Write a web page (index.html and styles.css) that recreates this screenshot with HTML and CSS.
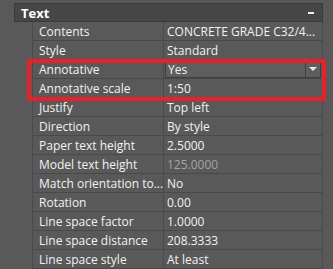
FILE: index.html
```html
<!DOCTYPE html>
<html lang="en">
  <head>
    <meta charset="UTF-8" />
    <title>Properties</title>
    <link rel="stylesheet" href="styles.css">
  </head>
  <body>
    <div class="panel">
      <div class="header">
        <span>Text</span>
        <span class="collapse"></span>
      </div>
      <div class="grid">
        <div class="row"><div class="label">Contents</div><div class="value">CONCRETE GRADE C32/4...</div></div>
        <div class="row"><div class="label">Style</div><div class="value">Standard</div></div>
        <div class="row">
          <div class="label">Annotative</div>
          <div class="value">
            <div class="select"><span>Yes</span><i class="arrow"></i></div>
          </div>
        </div>
        <div class="row"><div class="label">Annotative scale</div><div class="value">1:50</div></div>
        <div class="row"><div class="label">Justify</div><div class="value">Top left</div></div>
        <div class="row"><div class="label">Direction</div><div class="value">By style</div></div>
        <div class="row"><div class="label">Paper text height</div><div class="value">2.5000</div></div>
        <div class="row"><div class="label">Model text height</div><div class="value muted">125.0000</div></div>
        <div class="row"><div class="label">Match orientation to...</div><div class="value">No</div></div>
        <div class="row"><div class="label">Rotation</div><div class="value">0.00</div></div>
        <div class="row"><div class="label">Line space factor</div><div class="value">1.0000</div></div>
        <div class="row"><div class="label">Line space distance</div><div class="value">208.3333</div></div>
        <div class="row"><div class="label">Line space style</div><div class="value">At least</div></div>
      </div>
      <div class="highlight"></div>
    </div>
  </body>
</html>
```

FILE: styles.css
```css
* {
  margin: 0;
  padding: 0;
  box-sizing: border-box;
}
body {
  background: #595959;
  font-family: "Open Sans", "Noto Sans", sans-serif;
  font-size: 12px;
  color: #f2f2f2;
  overflow: hidden;
}
.panel {
  position: relative;
  margin: 3px 0 0 14px;
  width: 309px;
}
.header {
  display: flex;
  align-items: center;
  justify-content: space-between;
  height: 19px;
  padding: 0 5px 0 6px;
  background: #464646;
  border: 1px solid #3a3a3a;
  font-weight: bold;
  font-size: 13px;
  color: #fff;
}
.header .collapse {
  width: 6px;
  height: 2px;
  background: #f0f0f0;
  margin-right: 3px;
}
.grid {
  padding-left: 18px;
}
.row {
  display: flex;
  height: 19px;
  border-bottom: 1px solid #494949;
}
.label,
.value {
  display: flex;
  align-items: center;
  white-space: nowrap;
  overflow: hidden;
}
.label {
  width: 132px;
  padding-left: 6px;
  border-left: 1px solid #4a4a4a;
  border-right: 1px solid #4a4a4a;
}
.value {
  flex: 1;
  padding-left: 3px;
  border-right: 1px solid #4a4a4a;
}
.value.muted {
  color: #a3a3a3;
}
.select {
  display: flex;
  width: 156px;
  height: 17px;
  margin-left: -2px;
  background: #5e5e5e;
  border: 1px solid #3e3e3e;
}
.select span {
  flex: 1;
  padding-left: 2px;
  line-height: 15px;
  border-right: 1px solid #3e3e3e;
}
.select .arrow {
  width: 14px;
  display: flex;
  align-items: center;
  justify-content: center;
}
.select .arrow::before {
  content: "";
  border-left: 4px solid transparent;
  border-right: 4px solid transparent;
  border-top: 4px solid #e8e8e8;
}
.highlight {
  position: absolute;
  left: 13px;
  top: 56px;
  width: 299px;
  height: 42px;
  border: 4px solid #e8202a;
}
```
